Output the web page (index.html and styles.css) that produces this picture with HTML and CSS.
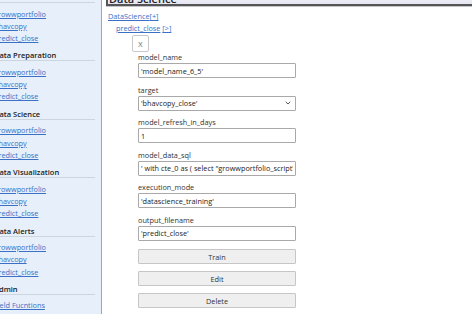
FILE: index.html
```html
<!DOCTYPE html>
<html lang="en">
<head>
  <meta charset="UTF-8" />
  <title>Data Science - predict_close</title>
  <link rel="stylesheet" href="styles.css">
</head>
<body>
  <div class="page">
    <aside class="sidebar">
      <div class="menu">
        <div class="menu-group">
          <h4>Data Collection</h4>
          <a href="#">growwportfolio</a>
          <a href="#">bhavcopy</a>
          <a href="#">predict_close</a>
        </div>
        <div class="menu-group">
          <h4>Data Preparation</h4>
          <a href="#">growwportfolio</a>
          <a href="#">bhavcopy</a>
          <a href="#">predict_close</a>
        </div>
        <div class="menu-group">
          <h4>Data Science</h4>
          <a href="#">growwportfolio</a>
          <a href="#">bhavcopy</a>
          <a href="#">predict_close</a>
        </div>
        <div class="menu-group">
          <h4>Data Visualization</h4>
          <a href="#">growwportfolio</a>
          <a href="#">bhavcopy</a>
          <a href="#">predict_close</a>
        </div>
        <div class="menu-group">
          <h4>Data Alerts</h4>
          <a href="#">growwportfolio</a>
          <a href="#">bhavcopy</a>
          <a href="#">predict_close</a>
        </div>
        <div class="menu-group">
          <h4>Admin</h4>
          <a href="#">Field Fucntions</a>
        </div>
      </div>
    </aside>

    <main class="content">
      <div class="page-title">
        <h2>Data Science</h2>
      </div>

      <div class="crumbs">
        <div><a href="#">DataScience</a><a href="#">[+]</a></div>
        <div class="crumb-sub"><a href="#">predict_close</a> <a href="#">[&gt;]</a></div>
      </div>

      <div class="model-form">
        <button type="button" class="close-btn">X</button>
        <form class="fields">
          <div class="field">
            <label for="model_name">model_name</label>
            <input type="text" id="model_name" value="'model_name_6_5'">
          </div>
          <div class="field">
            <label for="target">target</label>
            <select id="target">
              <option>'bhavcopy_close'</option>
            </select>
          </div>
          <div class="field">
            <label for="refresh">model_refresh_in_days</label>
            <input type="text" id="refresh" value="1">
          </div>
          <div class="field">
            <label for="sql">model_data_sql</label>
            <input type="text" id="sql" value="' with cte_0 as ( select &quot;growwportfolio_script&quot;.&quot;date&quot; from growwportfolio ) select * from cte_0'">
          </div>
          <div class="field">
            <label for="mode">execution_mode</label>
            <input type="text" id="mode" value="'datascience_training'">
          </div>
          <div class="field">
            <label for="output">output_filename</label>
            <input type="text" id="output" value="'predict_close'">
          </div>

          <div class="actions">
            <button type="button">Train</button>
            <button type="button">Edit</button>
            <button type="button">Delete</button>
          </div>
        </form>
      </div>
    </main>
  </div>
</body>
</html>
```

FILE: styles.css
```css
body {
  margin: 0;
  font-family: "Open Sans", "Noto Sans", sans-serif;
  font-size: 7.3px;
  color: #333;
  background-color: #fff;
  overflow: hidden;
}
a {
  color: #3a70c6;
}
.page {
  display: flex;
  height: 314px;
}

/* left menu */
.sidebar {
  flex: none;
  width: 101px;
  background-color: #e6effa;
  border-right: 1px solid #9ba7b8;
  overflow: hidden;
}
.menu {
  margin: -14px 6px 0 -6px;
}
.menu-group h4 {
  margin: 6px 0 4.5px;
  font-size: 7.5px;
  font-weight: 600;
  line-height: 10px;
  color: #222;
  border-bottom: 1px solid #cdd5df;
}
.menu-group a {
  display: block;
  line-height: 12.3px;
}

/* main area */
.content {
  flex: 1;
  padding-left: 4px;
  overflow: hidden;
}
.page-title {
  margin: -7px 2px 0 0;
  border-left: 2px solid #555;
  border-bottom: 2px solid #555;
  background: linear-gradient(#f7f7fd, #e6e6f3);
  box-shadow: 0 1px 0 #c4c4cc;
}
.page-title h2 {
  margin: 0;
  padding-left: 1px;
  font-size: 11px;
  font-weight: 600;
  line-height: 11px;
  color: #222;
}
.crumbs {
  margin-top: 4px;
  padding-left: 2px;
  line-height: 12px;
}
.crumb-sub {
  padding-left: 8px;
}
.model-form {
  padding-left: 26px;
}
.close-btn {
  display: block;
  width: 17px;
  height: 17px;
  margin-top: 1px;
  padding: 0;
  font-family: inherit;
  font-size: 7.5px;
  color: #666;
  background-color: #fff;
  border: 1px solid #c9c9c9;
  border-radius: 2px;
}
.fields {
  margin: 0;
  padding-left: 6px;
}
.field label {
  display: block;
  line-height: 11px;
  color: #333;
}
.field input,
.field select {
  display: block;
  width: 158px;
  height: 15px;
  margin: 0 0 6.5px;
  padding: 0 2px;
  box-sizing: border-box;
  font-family: inherit;
  font-size: 7.3px;
  color: #222;
  background-color: #fff;
  border: 1px solid #a9a9a9;
  border-radius: 1px;
}
.field select {
  appearance: none;
  -webkit-appearance: none;
  background-image: url("data:image/svg+xml,%3Csvg xmlns='http://www.w3.org/2000/svg' width='6' height='4' viewBox='0 0 6 4'%3E%3Cpath d='M0.7 0.8 L3 3 L5.3 0.8' fill='none' stroke='%23555' stroke-width='1'/%3E%3C/svg%3E");
  background-repeat: no-repeat;
  background-position: right 4px center;
  background-size: 6px 4px;
}
.actions {
  padding-top: 2px;
}
.actions button {
  display: block;
  width: 158px;
  height: 15px;
  margin-bottom: 7px;
  padding: 0;
  font-family: inherit;
  font-size: 7.3px;
  color: #333;
  background-color: #efefef;
  border: 1px solid #c6c6c6;
  border-radius: 1px;
}
```
